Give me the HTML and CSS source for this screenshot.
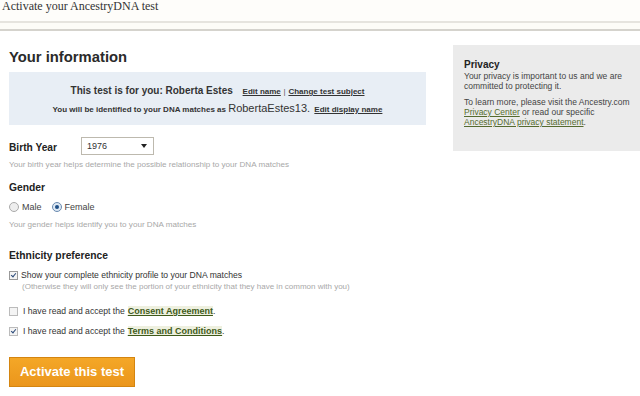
FILE: index.html
```html
<!DOCTYPE html>
<html lang="en">
<head>
  <meta charset="UTF-8" />
  <title>Activate your AncestryDNA test</title>
  <link rel="stylesheet" href="styles.css">
</head>
<body>
  <div class="page-title">Activate your AncestryDNA test</div>
  <div class="title-rule"></div>

  <div class="layout">
    <!-- Main form -->
    <div class="main">
      <h1>Your information</h1>
      <div class="subject-box">
        <div class="subject-line">
          <span class="subject-name">This test is for you: Roberta Estes</span>
          <a class="small-link" href="#">Edit name</a>
          <span class="sep">|</span>
          <a class="small-link" href="#">Change test subject</a>
        </div>
        <div class="display-line">
          You will be identified to your DNA matches as <span class="display-name">RobertaEstes13.</span>
          <a class="small-link" href="#">Edit display name</a>
        </div>
      </div>

      <div class="field-row">
        <label class="field-label">Birth Year</label>
        <div class="fake-select">
          <span>1976</span>
          <span class="arrow"></span>
        </div>
      </div>
      <div class="help">Your birth year helps determine the possible relationship to your DNA matches</div>

      <div class="section-label">Gender</div>
      <div class="radios">
        <label class="opt"><span class="radio"></span>Male</label>
        <label class="opt"><span class="radio checked"></span>Female</label>
      </div>
      <div class="help gender-help">Your gender helps identify you to your DNA matches</div>

      <div class="section-label eth">Ethnicity preference</div>
      <label class="check-row"><span class="box checked"></span>Show your complete ethnicity profile to your DNA matches</label>
      <div class="note">(Otherwise they will only see the portion of your ethnicity that they have in common with you)</div>

      <label class="check-row agree"><span class="box"></span>I have read and accept the <a class="doc-link" href="#">Consent Agreement</a>.</label>
      <label class="check-row agree"><span class="box checked"></span>I have read and accept the <a class="doc-link" href="#">Terms and Conditions</a>.</label>

      <a class="activate-btn" href="#">Activate this test</a>
    </div>

    <!-- Sidebar -->
    <div class="privacy">
      <div class="privacy-title">Privacy</div>
      <p>Your privacy is important to us and we are committed to protecting it.</p>
      <p>To learn more, please visit the Ancestry.com <a href="#">Privacy Center</a> or read our specific <a href="#">AncestryDNA privacy statement</a>.</p>
    </div>
  </div>
</body>
</html>
```

FILE: styles.css
```css
body {
  margin: 0;
  background: #fff;
  font-family: "Liberation Sans", Arial, sans-serif;
  color: #222;
  overflow: hidden;
}
.page-title {
  font-family: "Liberation Serif", "Times New Roman", serif;
  font-size: 12px;
  color: #333;
  padding: 0 0 0 2px;
  height: 21px;
  line-height: 12px;
  box-sizing: border-box;
  background: #fefdfa;
}
.title-rule {
  height: 6px;
  border-top: 2px solid #e6e4de;
  border-bottom: 2px solid #d5d3cd;
  background: #fdfcf7;
}
.layout {
  display: flex;
  padding-left: 9px;
}
.main {
  width: 417px;
}
h1 {
  font-size: 14.8px;
  font-weight: bold;
  color: #2a2a2a;
  margin: 17px 0 6px 0;
  line-height: 18px;
}
/* Test subject box */
.subject-box {
  background: #e8eef5;
  height: 53px;
  text-align: center;
  padding-top: 12px;
  box-sizing: border-box;
}
.subject-line {
  font-size: 10px;
  line-height: 14px;
}
.subject-name {
  font-weight: bold;
  color: #333;
  margin-right: 7px;
}
.sep {
  font-size: 8px;
  color: #555;
}
.small-link {
  font-size: 8px;
  font-weight: bold;
  color: #333;
  text-decoration: underline;
}
.display-line {
  font-size: 8px;
  font-weight: bold;
  color: #333;
  margin-top: 3px;
}
.display-name {
  font-size: 11px;
  font-weight: normal;
  color: #333;
  margin-right: 2px;
}
/* Form fields */
.field-row {
  display: flex;
  align-items: center;
  margin-top: 12px;
}
.field-label {
  font-size: 10.2px;
  font-weight: bold;
  width: 72px;
  padding-top: 2px;
}
.fake-select {
  width: 73px;
  height: 18px;
  box-sizing: border-box;
  border: 1px solid #bdb9ae;
  background: #fff;
  display: flex;
  align-items: center;
  justify-content: space-between;
  padding: 0 6px 0 5px;
  font-size: 9px;
  color: #333;
}
.arrow {
  width: 0;
  height: 0;
  border-left: 3px solid transparent;
  border-right: 3px solid transparent;
  border-top: 4px solid #222;
}
.help {
  font-size: 8.1px;
  color: #a8a8a8;
  margin-top: 5px;
}
.section-label {
  font-size: 10.3px;
  font-weight: bold;
  margin-top: 13px;
}
.section-label.eth {
  margin-top: 21px;
}
.radios {
  display: flex;
  gap: 10px;
  margin-top: 9px;
}
.opt {
  display: flex;
  align-items: center;
  font-size: 9px;
  color: #444;
}
.radio {
  width: 8px;
  height: 8px;
  border-radius: 50%;
  border: 1px solid #aaa;
  background: #eee;
  margin-right: 3px;
  position: relative;
}
.radio.checked {
  border-color: #6b8bb0;
  background: #dde8f3;
}
.radio.checked::after {
  content: "";
  position: absolute;
  left: 2px;
  top: 2px;
  width: 4px;
  height: 4px;
  border-radius: 50%;
  background: #1e4e86;
}
.gender-help {
  margin-top: 8px;
}
.check-row {
  display: flex;
  align-items: center;
  font-size: 8.6px;
  color: #333;
  margin-top: 9px;
}
.box {
  width: 7px;
  height: 7px;
  border: 1px solid #999;
  background: #f4f4f4;
  margin-right: 3px;
  position: relative;
  flex: none;
}
.check-row.agree .box {
  margin-right: 5px;
  border-color: #bbb;
}
.box.checked::after {
  content: "";
  position: absolute;
  left: 2px;
  top: 0;
  width: 2px;
  height: 4px;
  border: solid #2b4a7a;
  border-width: 0 1px 1px 0;
  transform: rotate(40deg);
}
.note {
  font-size: 8px;
  color: #a8a8a8;
  margin: 2px 0 0 13px;
}
.note + .check-row {
  margin-top: 15px;
}
.check-row.agree + .check-row.agree {
  margin-top: 10px;
}
.doc-link {
  font-size: 9px;
  font-weight: bold;
  color: #3f5a1a;
  text-decoration: underline;
  margin-left: 3px;
  background: #eef0df;
}
.activate-btn {
  display: inline-block;
  margin-top: 21px;
  width: 126px;
  height: 30px;
  line-height: 28px;
  box-sizing: border-box;
  text-align: center;
  background: linear-gradient(#f4a727, #eb961c);
  border: 1px solid #d48510;
  color: #fff;
  font-size: 13px;
  font-weight: bold;
  text-decoration: none;
}
/* Privacy sidebar */
.privacy {
  margin: 14px 0 0 27px;
  background: #ebebeb;
  width: 187px;
  height: 106px;
  box-sizing: border-box;
  padding: 14px 8px 0 11px;
  font-size: 8.5px;
  color: #444;
  line-height: 10px;
}
.privacy-title {
  font-size: 10px;
  font-weight: bold;
  color: #222;
  line-height: 12px;
}
.privacy p {
  margin: 0 0 6px 0;
}
.privacy a {
  color: #556b2f;
  text-decoration: underline;
}
```
